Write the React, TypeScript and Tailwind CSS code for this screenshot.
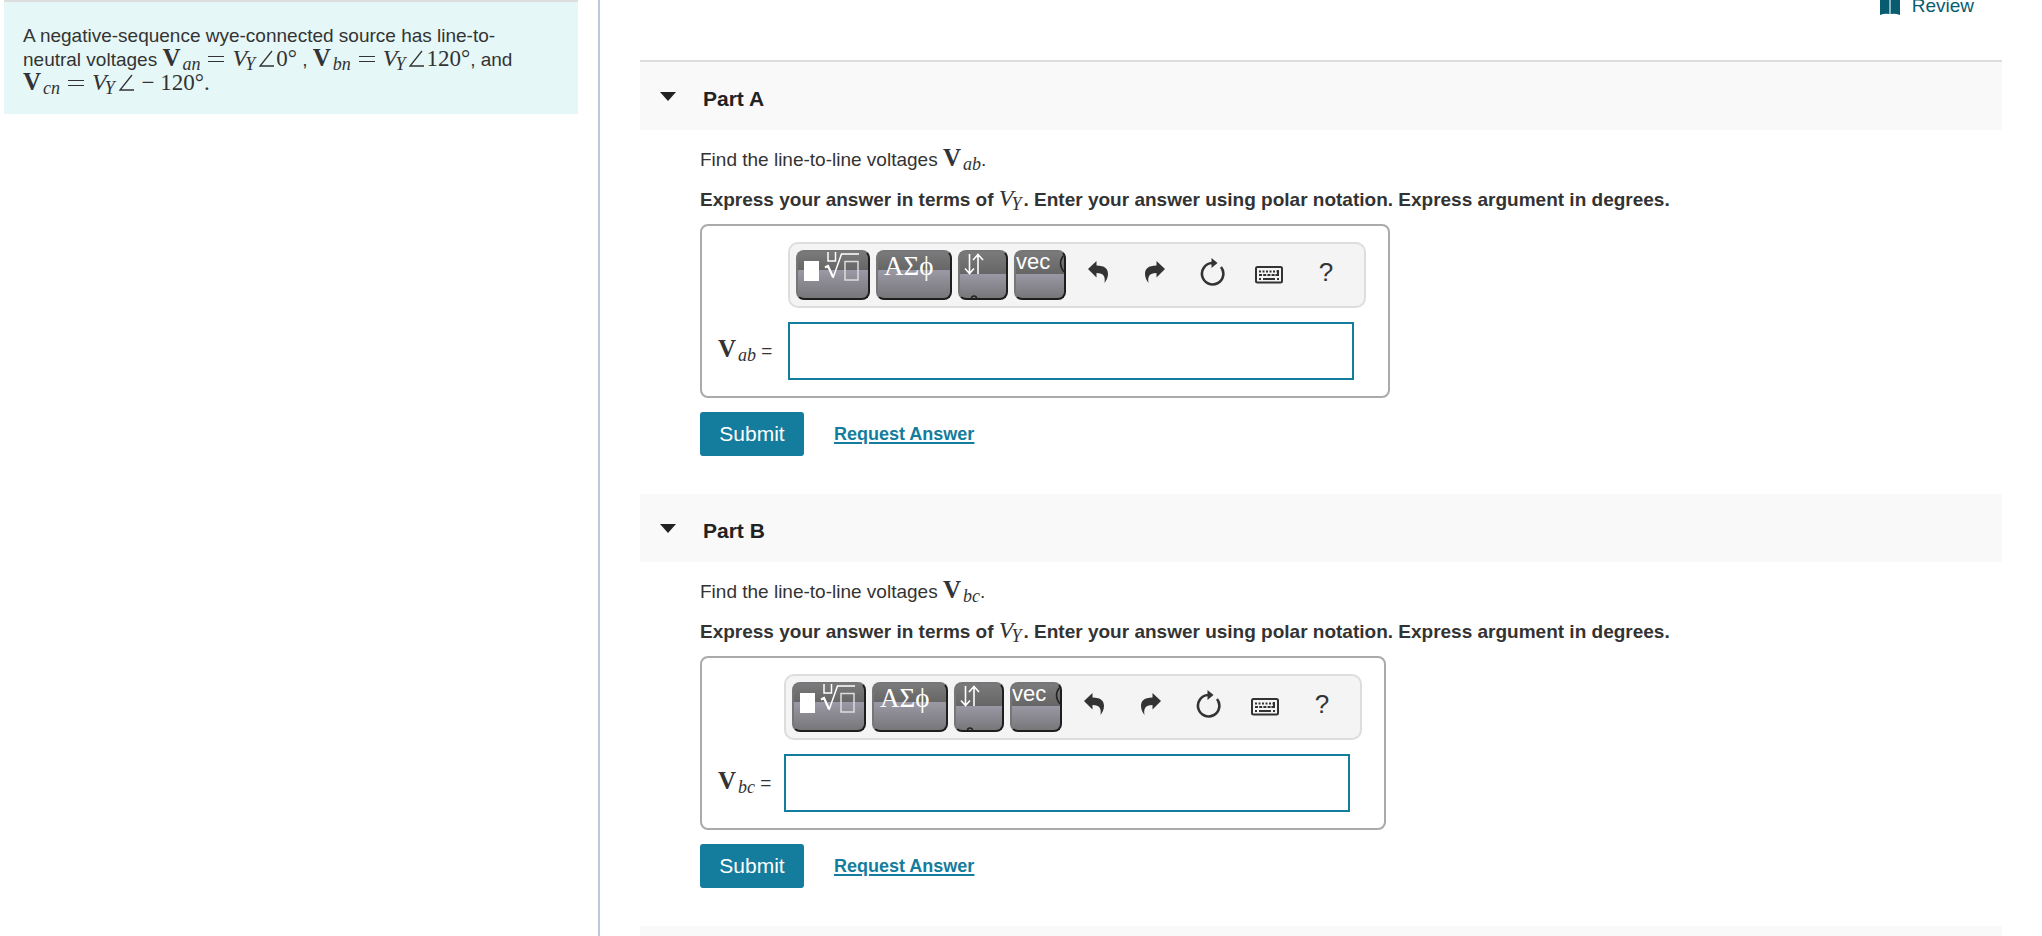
import type { ReactNode } from 'react'

interface PartProps {
  title: string
  sub: string
  labelWidth: string
  first?: boolean
}

function BoldV({ sub }: { sub: string }) {
  return (
    <span className="whitespace-nowrap font-['Liberation_Serif',serif] font-normal">
      <span className="text-[25px] leading-[0] font-bold">V</span>
      <span className="ml-0.5 align-[-4px] text-[18px] leading-[0] italic">{sub}</span>
    </span>
  )
}

function VY() {
  return (
    <span className="whitespace-nowrap font-['Liberation_Serif',serif] font-normal italic">
      <span className="text-[24px] leading-[0]">V</span>
      <span className="-ml-0.5 mr-0.5 align-[-4px] text-[18px] leading-[0]">Y</span>
    </span>
  )
}

function Num({ children }: { children: ReactNode }) {
  return <span className="font-['Liberation_Serif',serif] text-[23px] leading-[0]">{children}</span>
}

function Angle() {
  return (
    <svg className="mx-0.5 inline-block align-[-1px]" width="15" height="17" viewBox="0 0 15 17" fill="none" stroke="#333" strokeWidth="1.3">
      <path d="M13 1 1 16H15" />
    </svg>
  )
}

function Equals() {
  return (
    <svg className="mx-2 inline-block align-[1px]" width="16" height="12" viewBox="0 0 16 12" fill="none" stroke="#333" strokeWidth="1.2">
      <path d="M0 3.5H16M0 8.5H16" />
    </svg>
  )
}

function MathButton({ children, className }: { children: ReactNode; className: string }) {
  return (
    <button
      className={`h-[50px] shrink-0 overflow-hidden rounded-lg border-2 border-t-[#767676] border-l-[#767676] border-r-[#1e1e1e] border-b-[#1e1e1e] text-white ${className}`}
    >
      {children}
    </button>
  )
}

function IconButton({ label, children }: { label: string; children: ReactNode }) {
  return (
    <button aria-label={label} className="flex h-11 w-14 items-center justify-center text-[#333]">
      {children}
    </button>
  )
}

function Toolbar() {
  return (
    <div className="flex h-[66px] w-[578px] items-start rounded-[10px] border-2 border-[#ddd] bg-[#f4f4f4] px-1.5 pt-1.5">
      <div className="flex gap-1.5">
        <MathButton className="w-[74px] bg-[linear-gradient(#7a7a7c,#666_39%,#9b99a5_39%,#77777a)]">
          <svg width="70" height="46" viewBox="0 0 70 46" fill="none" stroke="#fff">
            <rect x="6" y="9" width="15" height="20" fill="#fff" stroke="none" />
            <path d="M30 0V9H37.5V0" strokeWidth="1.5" />
            <path d="M27 15.500 30 14 35 25" strokeWidth="2.200" />
            <path d="M35 26 43.500 2H61" strokeWidth="1.500" />
            <rect x="47" y="9.500" width="13" height="18.500" stroke="#ddd" strokeWidth="1.5" />
          </svg>
        </MathButton>
        <MathButton className="flex w-[76px] items-start bg-[linear-gradient(#7a7a7c,#666_39%,#9b99a5_39%,#77777a)] pl-1.5 font-['Liberation_Serif',serif] text-[27px] leading-7">
          ΑΣϕ
        </MathButton>
        <MathButton className="w-[50px] bg-[linear-gradient(#7a7a7c,#666_47%,#9b99a5_47%,#77777a)]">
          <svg width="46" height="46" viewBox="0 0 46 46" fill="none" stroke="#fff" strokeWidth="1.6">
            <path d="M9.500 2V21M5 16.500 9.500 21.500 14 16.500M18 22V2.500M13 8 18 2.500 23 8" />
            <circle cx="14" cy="46.500" r="2.500" stroke="#222" />
          </svg>
        </MathButton>
        <MathButton className="flex w-[52px] items-start bg-[linear-gradient(#7a7a7c,#666_47%,#9b99a5_47%,#77777a)] font-['Liberation_Sans',sans-serif] text-[22px] leading-5">
          <span>vec</span>
          <svg className="ml-auto shrink-0" width="5" height="22" viewBox="0 0 5 22" fill="none" stroke="#222" strokeWidth="1.5">
            <path d="M5 3Q-2 11 5 20" />
          </svg>
        </MathButton>
      </div>
      <div className="ml-1 flex gap-px">
        <IconButton label="undo">
          <svg width="22" height="24" viewBox="0 0 22 24" fill="currentColor">
            <path d="M1 9 9.500 1V5.500C18 5.500 21 9 21 14 21 18 19 21 17.500 23 18.500 17 17 13 9.500 13V17.500Z" />
          </svg>
        </IconButton>
        <IconButton label="redo">
          <svg width="22" height="24" viewBox="0 0 22 24" fill="currentColor">
            <path d="M21 9 12.500 1V5.500C4 5.500 1 9 1 14 1 18 3 21 4.500 23 3.500 17 5 13 12.500 13V17.500Z" />
          </svg>
        </IconButton>
        <IconButton label="reset">
          <svg width="26" height="28" viewBox="0 0 26 28" fill="none" stroke="currentColor" strokeWidth="2.600">
            <path d="M13 5A10.700 10.700 0 1 0 22 9" />
            <path d="M12.500 0 18.500 5 12.500 10Z" fill="currentColor" stroke="none" />
          </svg>
        </IconButton>
        <IconButton label="keyboard shortcuts">
          <svg className="mt-1.5" width="28" height="18" viewBox="0 0 28 18" fill="none" stroke="currentColor" strokeWidth="2">
            <rect x="1" y="1" width="26" height="15.500" rx="1.500" />
            <path d="M4 5.500H22" strokeDasharray="2 1.500" />
            <path d="M4 9H21" strokeDasharray="3 1.200" />
            <path d="M4 13H6M8 13H20M22 13H24M20.500 9H23V4" />
          </svg>
        </IconButton>
        <IconButton label="help">
          <span className="font-['Liberation_Sans',sans-serif] text-[26px] leading-none">?</span>
        </IconButton>
      </div>
    </div>
  )
}

function PartHeader({ title, first }: { title: string; first?: boolean }) {
  return (
    <h2 className={`bg-[#f9f9f9] ${first ? 'border-t-2 border-[#ddd]' : ''}`}>
      <button className="flex h-[68px] w-full items-center pt-0.5 pl-5 text-left text-[21px] font-bold text-[#222]">
        <svg width="16" height="10" viewBox="0 0 16 10" fill="currentColor">
          <path d="M0 0H16L8 9Z" />
        </svg>
        <span className="ml-[27px] mt-1">{title}</span>
      </button>
    </h2>
  )
}

function Part({ title, sub, labelWidth, first }: PartProps) {
  const inputId = `answer-${sub}`

  return (
    <section className="pb-[38px]">
      <PartHeader title={title} first={first} />
      <div className="pl-[60px]">
        <p className="pt-4 leading-7">
          Find the line-to-line voltages <BoldV sub={sub} />.
        </p>
        <p className="mt-3 font-bold leading-7">
          Express your answer in terms of <VY />. Enter your answer using polar notation. Express argument in degrees.
        </p>
        <div className="mt-2.5 inline-block rounded-lg border-2 border-[#aaa] py-4 pr-[22px] pl-4 align-top">
          <div className="flex">
            <div className={`shrink-0 ${labelWidth}`} />
            <Toolbar />
          </div>
          <div className="mt-3.5 flex items-center">
            <label htmlFor={inputId} className={`shrink-0 whitespace-nowrap ${labelWidth}`}>
              <BoldV sub={sub} /> =
            </label>
            <input id={inputId} type="text" className="h-[58px] w-[566px] border-2 border-[#147c9c] bg-white px-3 outline-none" />
          </div>
        </div>
        <div className="mt-3.5 flex items-center">
          <button className="h-11 w-[104px] rounded-[3px] bg-[#147c9c] text-[21px] text-white">Submit</button>
          <a href="#" className="ml-[30px] text-lg font-bold text-[#147c9c] underline decoration-2 underline-offset-2">
            Request Answer
          </a>
        </div>
      </div>
    </section>
  )
}

export default function App() {
  return (
    <div className="flex min-h-screen bg-white font-['Liberation_Sans',sans-serif] text-[19px] text-[#333]">
      <aside className="w-[600px] shrink-0 border-r-2 border-[#b8c9dd] pr-5 pl-1">
        <div className="border-t-2 border-[#ddd] bg-[#e6f7f7] pt-[22px] pb-[18px] pl-[19px] leading-6">
          <p>
            A negative-sequence wye-connected source has line-to-
            <br />
            neutral voltages <BoldV sub="an" />
            <Equals />
            <VY />
            <Angle />
            <Num>0°</Num> , <BoldV sub="bn" />
            <Equals />
            <VY />
            <Angle />
            <Num>120°</Num>, and
            <br />
            <BoldV sub="cn" />
            <Equals />
            <VY />
            <Angle />
            <Num> − 120°.</Num>
          </p>
        </div>
      </aside>
      <main className="min-w-0 flex-1 pr-10 pl-10">
        <div className="flex h-[60px] justify-end overflow-hidden pr-7">
          <a href="#" className="-mt-1.5 flex h-6 items-center gap-3 text-[#085c70]">
            <svg width="20" height="18" viewBox="0 0 20 18" fill="currentColor">
              <path d="M0 0Q5-1 9 1V17Q5 16 0 18ZM20 0Q15-1 11 1V17Q15 16 20 18Z" />
              <path d="M9 1H11V17H9Z" fill="#8bb4be" />
            </svg>
            Review
          </a>
        </div>
        <Part title="Part A" sub="ab" labelWidth="w-[70px]" first />
        <Part title="Part B" sub="bc" labelWidth="w-[66px]" />
        <div className="h-2.5 bg-[#f9f9f9]" />
      </main>
    </div>
  )
}
